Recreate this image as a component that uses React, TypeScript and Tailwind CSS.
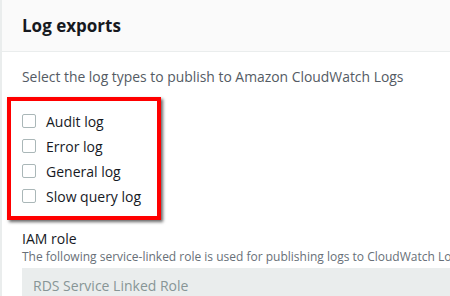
import React from "react";

const items = ["Audit log", "Error log", "General log", "Slow query log"];

export default function App() {
  return (
    <div
      className="w-[450px] h-[296px] overflow-hidden bg-white border-l-2 border-[#eaeded] text-[#16191f]"
      style={{ fontFamily: '"Open Sans", "Noto Sans", Arial, sans-serif' }}
    >
      <div className="h-[52px] bg-[#fafafa] border-b border-[#eaeded] pl-5 flex items-center">
        <h2 className="text-[17px] font-bold leading-none">Log exports</h2>
      </div>
      <div className="pl-5 pt-[15px]">
        <p className="text-[13.9px] text-[#545b64] leading-5">
          Select the log types to publish to Amazon CloudWatch Logs
        </p>
        <div className="ml-[-15px] mt-[10px] w-[154px] border-4 border-[#ff0000] shadow-[2px_2px_3px_rgba(0,0,0,0.6)] pl-[11px] pt-[11px] pb-[11px] flex flex-col gap-[7px]">
          {items.map((t) => (
            <label key={t} className="flex items-center gap-[10px] h-[18px] text-[14px] text-[#16191f]">
              <span className="w-[14px] h-[14px] border border-[#aab7b8] rounded-[2px] bg-white" />
              {t}
            </label>
          ))}
        </div>
        <div className="mt-[9px] text-[14px] leading-5 text-[#16191f]">IAM role</div>
        <div className="text-[12px] leading-4 text-[#687078] whitespace-nowrap">
          The following service-linked role is used for publishing logs to CloudWatch Logs.
        </div>
        <div className="mt-[3px] h-[34px] bg-[#eaeded] pl-[11px] flex items-center text-[14px] text-[#879596] whitespace-nowrap">
          RDS Service Linked Role
        </div>
      </div>
    </div>
  );
}
